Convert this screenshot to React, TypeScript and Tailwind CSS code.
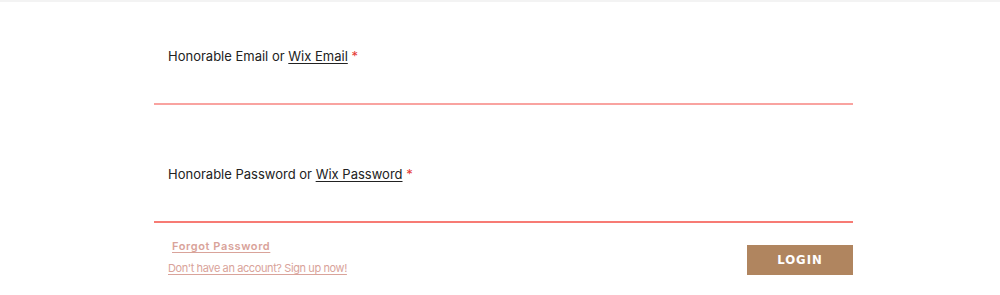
import React from "react";

export default function App() {
  return (
    <div className="w-[1000px] h-[295px] bg-white border-t-2 border-[#f3f3f3] overflow-hidden" style={{ fontFamily: '"Inter", "Noto Sans", sans-serif' }}>
      <div className="ml-[154px] w-[699px]">
        <div className="h-[103px] border-b-2 border-[#f9a3a0] flex flex-col">
          <div className="pt-[45px] pl-[14px] text-[13px] text-[#222] tracking-[0px]">
            Honorable Email or <span className="underline underline-offset-2">Wix Email</span> <span className="text-[#e53935]">*</span>
          </div>
        </div>
        <div className="h-[118px] border-b-2 border-[#f77b74]">
          <div className="pt-[60px] pl-[14px] text-[13px] text-[#222] tracking-[0px]">
            Honorable Password or <span className="underline underline-offset-2">Wix Password</span> <span className="text-[#e53935]">*</span>
          </div>
        </div>
        <div className="flex justify-between items-start pt-[16px]">
          <div className="pl-[14px] flex flex-col">
            <span className="pl-[4px] text-[11px] font-semibold tracking-[0.6px] text-[#d9a39a] underline underline-offset-2 leading-[14px]">Forgot Password</span>
            <span className="mt-[8px] text-[11px] text-[#d9a39a] underline underline-offset-2 leading-[14px] tracking-[-0.4px]">Don't have an account? Sign up now!</span>
          </div>
          <div className="mt-[6px] w-[106px] h-[30px] bg-[#b0855f] flex items-center justify-center text-white text-[13px] font-bold tracking-[1px]" style={{ fontFamily: '"Liberation Sans Narrow", "DejaVu Sans Condensed", sans-serif' }}>
            LOGIN
          </div>
        </div>
      </div>
    </div>
  );
}
